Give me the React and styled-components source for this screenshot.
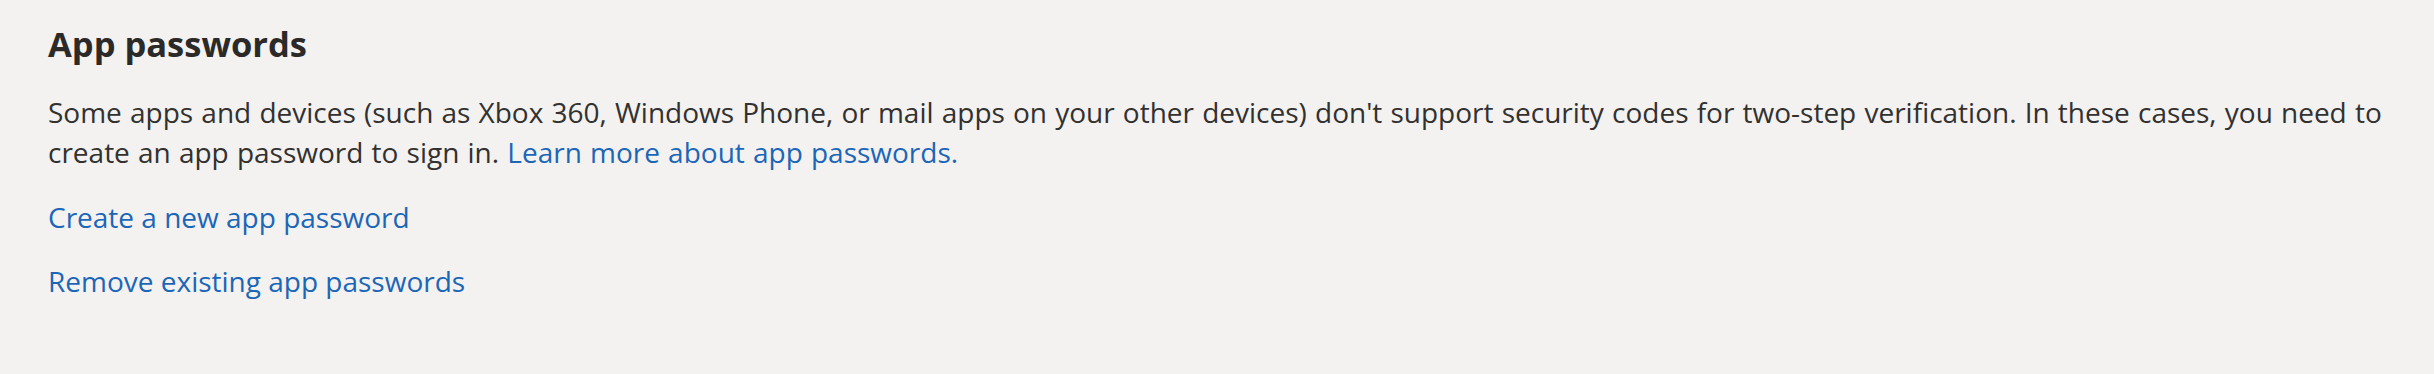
import React from 'react';
import styled, { createGlobalStyle } from 'styled-components';

const GlobalStyle = createGlobalStyle`
	html, body {
		margin: 0;
		padding: 0;
		background-color: #f3f2f1;
	}
	body {
		font-family: "Open Sans", "Noto Sans", sans-serif;
		color: #323130;
	}
`

const Section = styled.section`
	min-height: 374px;
	box-sizing: border-box;
	padding: 22px 30px 0 48px;
	display: flex;
	flex-direction: column;
	align-items: flex-start;
`

const Heading = styled.h2`
	margin: 0;
	font-size: 34.5px;
	line-height: 44px;
	font-weight: 700;
	color: #2b2a29;
`

const Description = styled.p`
	margin: 26px 0 0;
	max-width: 2370px;
	font-size: 28px;
	line-height: 40px;
	word-spacing: 0.9px;
	color: #323130;
`

const Link = styled.a`
	color: #1c66b8;
	text-decoration: none;
	cursor: pointer;
	&:hover {
		text-decoration: underline;
	}
`

const ActionLink = styled(Link)`
	display: block;
	margin-top: ${props => props.gap || '24px'};
	font-size: 28px;
	line-height: 40px;
`

const AppPasswords = () => {
	return (<Section>
						<Heading>App passwords</Heading>
						<Description>
							Some apps and devices (such as Xbox 360, Windows Phone, or mail apps on your other devices) don't support security codes for two-step verification. In these cases, you need to create an app password to sign in. <Link>Learn more about app passwords.</Link>
						</Description>
						<ActionLink gap="25px">Create a new app password</ActionLink>
						<ActionLink>Remove existing app passwords</ActionLink>
					</Section>);
};

const App = () => (
	<>
		<GlobalStyle />
		<AppPasswords />
	</>
);

export default App
